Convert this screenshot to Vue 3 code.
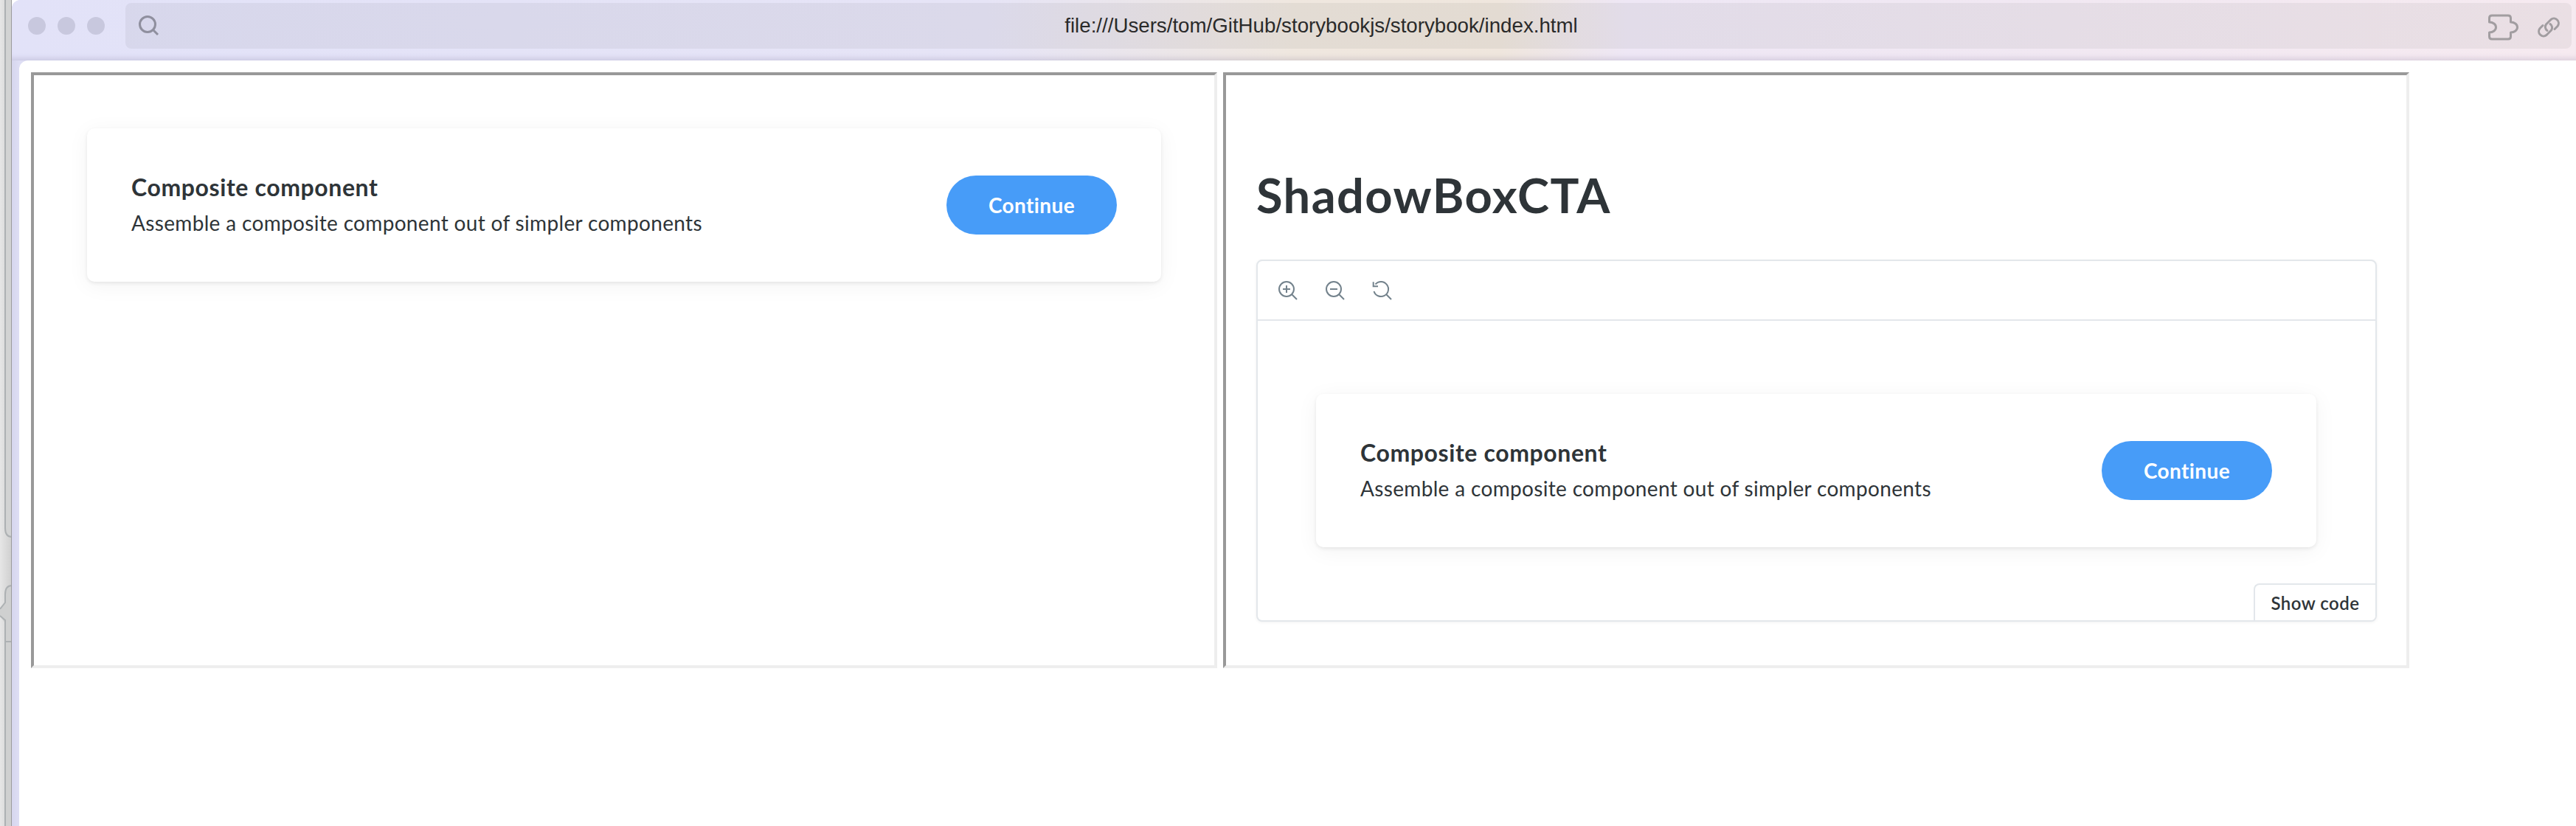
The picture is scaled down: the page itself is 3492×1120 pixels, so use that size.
<template>
  <div class="screen">
    <svg class="desk" width="16" height="1120" viewBox="0 0 16 1120" aria-hidden="true">
      <defs>
        <linearGradient id="deskFill" x1="0" x2="1" y1="0" y2="0">
          <stop offset="0" stop-color="#e6e6e6" />
          <stop offset="1" stop-color="#cfcfcf" />
        </linearGradient>
      </defs>
      <rect width="16" height="1120" fill="url(#deskFill)" />
      <path d="M7 0V716Q7 728 16 728V0Z" fill="#d2d3d3" />
      <path d="M16 794Q7 794 7 806V817L0 827V835L7 845V1120H16Z" fill="#cfd0d0" />
      <path d="M7 0V716Q7 728 16 728M16 794Q7 794 7 806V817L0 826M0 835L7 841V1120M7 870H16" fill="none" stroke="#adb1b3" stroke-width="2" />
      <rect x="15" width="1" height="1120" fill="#9c9c9c" />
    </svg>
    <div class="window">
      <header class="toolbar">
        <div class="lights">
          <span class="light"></span>
          <span class="light"></span>
          <span class="light"></span>
        </div>
        <div class="address">
          <svg class="search" width="28" height="28" viewBox="0 0 28 28" aria-hidden="true">
            <circle cx="12" cy="12" r="10.5" />
            <path d="M19.5 19.5L26 26" />
          </svg>
          <span class="url">file:///Users/tom/GitHub/storybookjs/storybook/index.html</span>
          <div class="address-actions">
            <svg width="42" height="36" viewBox="0 0 42 36" aria-hidden="true">
              <path d="M5 2H27Q30.500 2 30.500 5.500V11A9 7 0 0 1 30.500 25V30.500Q30.500 34 27 34H5Q1.500 34 1.500 30.500V25A9 7 0 0 0 1.500 11V5.500Q1.500 2 5 2Z" />
            </svg>
            <svg width="32" height="32" viewBox="0 0 32 32" aria-hidden="true">
              <path d="M14 20.500A6 6 0 0 1 12.500 12L19 5.500A6.400 6.400 0 0 1 28 14.500L24 18.500M18 11.500A6 6 0 0 1 19.500 20L13 26.500A6.400 6.400 0 0 1 4 17.500L8 13.500" />
            </svg>
          </div>
        </div>
      </header>
      <main class="content">
        <section class="frame story-frame">
          <article class="cta">
            <div class="cta-text">
              <h2>Composite component</h2>
              <p>Assemble a composite component out of simpler components</p>
            </div>
            <button class="cta-btn" type="button">Continue</button>
          </article>
        </section>
        <section class="frame docs-frame">
          <h1>ShadowBoxCTA</h1>
          <div class="preview">
            <div class="preview-bar">
              <svg v-for="icon in zoomIcons" :key="icon.name" width="28" height="28" viewBox="0 0 28 28" :aria-label="icon.name">
                <path :d="icon.d" />
              </svg>
            </div>
            <div class="preview-stage">
              <article class="cta">
                <div class="cta-text">
                  <h2>Composite component</h2>
                  <p>Assemble a composite component out of simpler components</p>
                </div>
                <button class="cta-btn" type="button">Continue</button>
              </article>
            </div>
            <button class="show-code" type="button">Show code</button>
          </div>
        </section>
      </main>
    </div>
  </div>
</template>

<script setup>
const lens = 'M22 12A10 10 0 1 1 2 12A10 10 0 1 1 22 12ZM19 19L26 26'
const zoomIcons = [
  { name: 'zoom in', d: `${lens}M12 7V17M7 12H17` },
  { name: 'zoom out', d: `${lens}M7 12H17` },
  { name: 'reset', d: 'M4.500 5.500A10 10 0 1 1 2.500 15M19 19L26 26M1.700 2.300V8.300H8' },
]
</script>

<style>
html, body { margin: 0; background: #fff; }
</style>

<style scoped>
.screen {
  display: flex;
  width: 3492px;
  height: 1120px;
  overflow: hidden;
  font-family: Lato, "Open Sans", sans-serif;
  color: #2e3438;
}
.desk { flex: none; display: block; }
.window {
  flex: 1;
  display: flex;
  flex-direction: column;
  border-top-left-radius: 12px;
  background: linear-gradient(to right, #d6d6ee, #dedef4 10px, #dedef4);
}
.toolbar {
  flex: none;
  box-sizing: border-box;
  height: 82px;
  display: flex;
  align-items: flex-start;
  padding: 4px 6px 0 22px;
  border-top-left-radius: 12px;
  background: linear-gradient(to right, #e2e2f8 0%, #e6e4f6 38%, #efe7df 50%, #efe6dd 58%, #eee7f5 63%, #f1e8f2 80%, #f6eaf0 100%);
  box-shadow: inset 0 -8px 7px -5px rgba(80, 70, 120, 0.16);
}
.lights { display: flex; gap: 16px; padding: 19px 0 0 0; margin-right: 28px; }
.light { width: 24px; height: 24px; border-radius: 50%; background: #c8c8de; }
.address {
  flex: 1;
  position: relative;
  height: 62px;
  display: flex;
  align-items: center;
  justify-content: center;
  padding: 0 16px 0 18px;
  border-radius: 8px;
  background: rgba(40, 40, 40, 0.055);
}
.search { position: absolute; left: 18px; top: 17px; fill: none; stroke: #8f8f9e; stroke-width: 3; }
.url {
  font-family: "Liberation Sans", Arial, sans-serif;
  font-size: 27.700px;
  color: #2a2a2a;
  white-space: nowrap;
  transform: translateX(-38px);
}
.address-actions {
  position: absolute;
  right: 15px;
  top: 15px;
  display: flex;
  align-items: center;
  gap: 24px;
}
.address-actions svg { fill: none; stroke: #a19da0; stroke-width: 3; stroke-linecap: round; stroke-linejoin: round; }
.content {
  flex: 1;
  display: flex;
  align-items: flex-start;
  gap: 8px;
  margin-left: 10px;
  padding: 16px 0 0 16px;
  border-top-left-radius: 12px;
  background: #fff;
}
.frame {
  box-sizing: border-box;
  flex: none;
  height: 808px;
  width: 1608px;
  border-style: solid;
  border-width: 4px;
  border-color: #999 #eee #eee #999;
  background: #fff;
}
.story-frame { padding: 72px 72px 0 72px; }
.docs-frame { padding: 0 40px 0 41px; }
.cta {
  box-sizing: border-box;
  height: 208px;
  display: flex;
  align-items: center;
  justify-content: space-between;
  padding: 0 60px 0 60px;
  border-radius: 10px;
  background: #fff;
  box-shadow: 0 2px 5px rgba(0, 0, 0, 0.08), 0 5px 30px rgba(0, 0, 0, 0.05);
}
.cta-text { display: flex; flex-direction: column; gap: 9px; padding-bottom: 2px; }
h2 { margin: 0; font-size: 32px; line-height: 40px; font-weight: 700; color: #2e3438; letter-spacing: 0.6px; }
p { margin: 0; font-size: 28px; line-height: 38px; font-weight: 400; color: #2e3438; letter-spacing: 0.33px; }
.cta-btn {
  flex: none;
  width: 231px;
  height: 80px;
  padding: 0;
  border: 0;
  border-radius: 40px;
  background: #479cf8;
  color: #fff;
  font: 700 28px Lato, "Open Sans", sans-serif;
  letter-spacing: 0.4px;
}
h1 {
  margin: 0;
  padding-top: 124px;
  font-size: 65px;
  line-height: 76px;
  font-weight: 700;
  color: #2e3438;
  letter-spacing: 1.4px;
}
.preview {
  position: relative;
  box-sizing: border-box;
  height: 491px;
  margin-top: 50px;
  border: 2px solid #e3e7eb;
  border-radius: 8px;
  background: #fff;
  box-shadow: 0 1px 4px rgba(0, 0, 0, 0.06);
  overflow: hidden;
}
.preview-bar {
  box-sizing: border-box;
  height: 81px;
  display: flex;
  align-items: flex-start;
  gap: 36px;
  padding: 26px 0 0 27px;
  border-bottom: 2px solid #e3e7eb;
}
.preview-bar svg { fill: none; stroke: #73828c; stroke-width: 2; }
.preview-stage { padding: 99px 80px 0 79px; }
.show-code {
  position: absolute;
  right: 0;
  bottom: 0;
  box-sizing: border-box;
  width: 165px;
  height: 50px;
  padding: 0;
  border: solid #e3e7eb;
  border-width: 2px 0 0 2px;
  border-top-left-radius: 8px;
  background: #fff;
  color: #2e3438;
  font: 600 24px Lato, "Open Sans", sans-serif;
  letter-spacing: 0.5px;
}
</style>
